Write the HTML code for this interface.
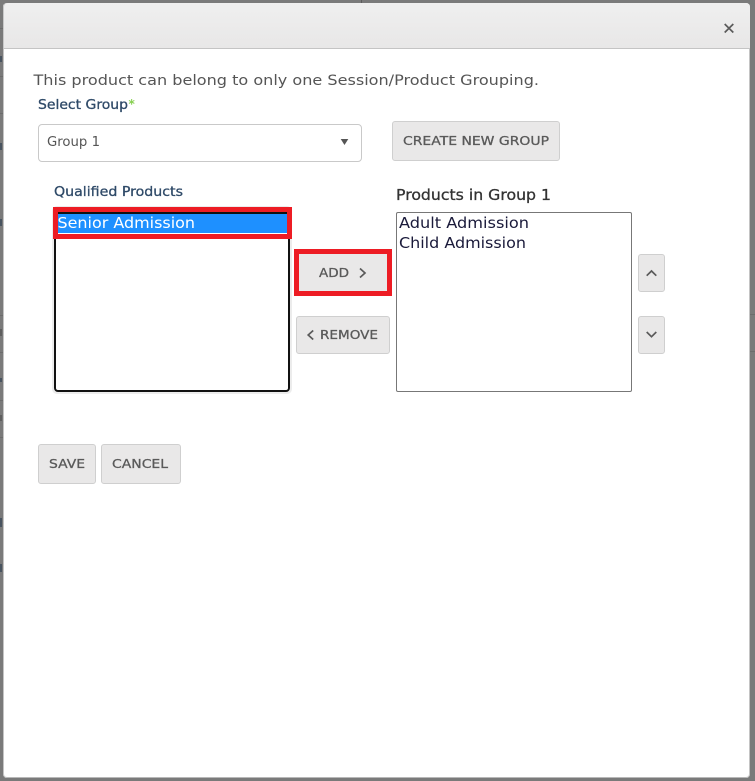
<!DOCTYPE html>
<html lang="en">
<head>
<meta charset="utf-8">
<title>Session/Product Grouping</title>
<style>
html,body{margin:0;padding:0;width:755px;height:781px;overflow:hidden;background:#7a7a7a;}
body{position:relative;font-family:"DejaVu Sans",sans-serif;}
.abs{position:absolute;box-sizing:border-box;}
.line{position:absolute;height:1px;background:#6c6c6c;}
.mark{position:absolute;left:0;width:2px;background:#3a4858;opacity:.75;}
#modal{left:3px;top:3px;width:747px;height:775px;background:#fff;border-radius:4px;box-shadow:inset 1px 0 0 #c4c4c4,inset -1px 0 0 #c4c4c4,inset 0 -1px 0 #b8b8b8;}
#head{left:3px;top:3px;width:747px;height:46px;background:linear-gradient(#efefef,#e8e7e7);border-bottom:1px solid #c4c4c4;border-radius:4px 4px 0 0;box-shadow:inset 1px 0 0 #c8c8c8;}
.btn{background:#e9e8e8;border:1px solid #cfcfcf;border-radius:3px;}
svg.overlay{position:absolute;left:0;top:0;}
svg text{font-family:"DejaVu Sans",sans-serif;}
svg text.semi{stroke-width:.3px;}
</style>
</head>
<body>
<div class="line" style="left:0;width:3px;top:28px"></div>
<div class="line" style="left:0;width:3px;top:76px"></div>
<div class="line" style="left:0;width:3px;top:113px"></div>
<div class="line" style="left:0;width:3px;top:315px"></div>
<div class="line" style="left:0;width:3px;top:352px"></div>
<div class="line" style="left:0;width:3px;top:400px"></div>
<div class="line" style="left:0;width:3px;top:437px"></div>
<div class="line" style="left:750px;width:5px;top:314px"></div>
<div class="line" style="left:750px;width:5px;top:351px"></div>
<div class="mark" style="top:56px;height:6px"></div>
<div class="mark" style="top:143px;height:7px"></div>
<div class="mark" style="top:219px;height:7px"></div>
<div class="mark" style="top:329px;height:7px;background:#555"></div>
<div class="mark" style="top:378px;height:4px"></div>
<div class="mark" style="top:415px;height:6px;background:#555"></div>
<div class="mark" style="top:518px;height:9px"></div>
<div class="mark" style="top:564px;height:8px"></div>
<div class="abs" style="left:361px;top:0;width:1px;height:3px;background:#5c5c5c"></div>

<div class="abs" id="modal"></div>
<div class="abs" id="head"></div>

<!-- select -->
<div class="abs" style="left:38px;top:124px;width:324px;height:38px;background:#fff;border:1px solid #c9c9c9;border-radius:4px"></div>

<!-- buttons -->
<div class="abs btn" style="left:392px;top:121px;width:168px;height:40px"></div>
<div class="abs btn" style="left:296px;top:316px;width:94px;height:38px"></div>
<div class="abs btn" style="left:638px;top:254px;width:27px;height:38px"></div>
<div class="abs btn" style="left:638px;top:316px;width:27px;height:38px"></div>
<div class="abs btn" style="left:38px;top:444px;width:58px;height:40px"></div>
<div class="abs btn" style="left:101px;top:444px;width:80px;height:40px"></div>

<!-- ADD button with red highlight -->
<div class="abs" style="left:294px;top:249px;width:98px;height:47px;background:#e9e8e8;border:5px solid #ed1c24"></div>

<!-- qualified list -->
<div class="abs" style="left:52px;top:206px;width:240px;height:188px;border-radius:5px;background:#ececec"></div>
<div class="abs" style="left:54px;top:212px;width:236px;height:180px;background:#fff;border:2px solid #111;border-radius:4px"></div>
<div class="abs" style="left:58px;top:214px;width:229px;height:19px;background:#1e90ff"></div>
<div class="abs" style="left:53px;top:207px;width:239px;height:32px;border:5px solid #ed1c24"></div>
<div class="abs" style="left:58px;top:212px;width:229px;height:2px;background:#111"></div>

<!-- group list -->
<div class="abs" style="left:396px;top:212px;width:236px;height:180px;background:#fff;border:1px solid #777;border-radius:2px"></div>

<svg class="overlay" width="755" height="781" viewBox="0 0 755 781">
  <path d="M724.700 24 L733.300 32.500 M733.300 24 L724.700 32.500" stroke="#5a5a5a" stroke-width="1.700" fill="none"/>
  <text x="33.500" y="85" font-size="14.500" fill="#555" textLength="505.500" lengthAdjust="spacingAndGlyphs">This product can belong to only one Session/Product Grouping.</text>
  <text class="semi" x="38" y="109" font-size="13.500" fill="#2f4a68" stroke="#2f4a68" textLength="90" lengthAdjust="spacingAndGlyphs">Select Group</text>
  <text x="128.500" y="108" font-size="12" font-weight="bold" fill="#86cf50">*</text>
  <text x="47" y="146" font-size="13.500" fill="#555" textLength="53" lengthAdjust="spacingAndGlyphs">Group 1</text>
  <path d="M340.700 139 H348.300 L344.500 145 Z" fill="#555"/>
  <text class="semi" x="403" y="145" font-size="12" fill="#5a5a5a" stroke="#5a5a5a" textLength="146" lengthAdjust="spacingAndGlyphs">CREATE NEW GROUP</text>
  <text class="semi" x="54" y="196" font-size="13.500" fill="#2f4a68" stroke="#2f4a68" textLength="129" lengthAdjust="spacingAndGlyphs">Qualified Products</text>
  <text class="semi" x="396" y="200" font-size="15" fill="#333" stroke="#333" textLength="155" lengthAdjust="spacingAndGlyphs">Products in Group 1</text>
  <text x="57.500" y="228" font-size="15.500" fill="#fff" textLength="137.500" lengthAdjust="spacingAndGlyphs">Senior Admission</text>
  <text x="399" y="228" font-size="15.500" fill="#1a1a3a" textLength="130" lengthAdjust="spacingAndGlyphs">Adult Admission</text>
  <text x="399" y="248" font-size="15.500" fill="#1a1a3a" textLength="127" lengthAdjust="spacingAndGlyphs">Child Admission</text>
  <text class="semi" x="319" y="277" font-size="12" fill="#5a5a5a" stroke="#5a5a5a" textLength="30" lengthAdjust="spacingAndGlyphs">ADD</text>
  <path d="M360 268.500 L365 273 L360 277.500" stroke="#5a5a5a" stroke-width="1.700" fill="none"/>
  <path d="M313.200 330.500 L308.200 335 L313.200 339.500" stroke="#5a5a5a" stroke-width="1.700" fill="none"/>
  <text class="semi" x="320" y="339" font-size="12" fill="#5a5a5a" stroke="#5a5a5a" textLength="58" lengthAdjust="spacingAndGlyphs">REMOVE</text>
  <path d="M646.700 275.700 L651.500 271 L656.300 275.700" stroke="#5a5a5a" stroke-width="1.700" fill="none"/>
  <path d="M646.700 332 L651.500 336.700 L656.300 332" stroke="#5a5a5a" stroke-width="1.700" fill="none"/>
  <text class="semi" x="49" y="468" font-size="12" fill="#5a5a5a" stroke="#5a5a5a" textLength="36" lengthAdjust="spacingAndGlyphs">SAVE</text>
  <text class="semi" x="112" y="468" font-size="12" fill="#5a5a5a" stroke="#5a5a5a" textLength="56" lengthAdjust="spacingAndGlyphs">CANCEL</text>
</svg>
</body>
</html>
